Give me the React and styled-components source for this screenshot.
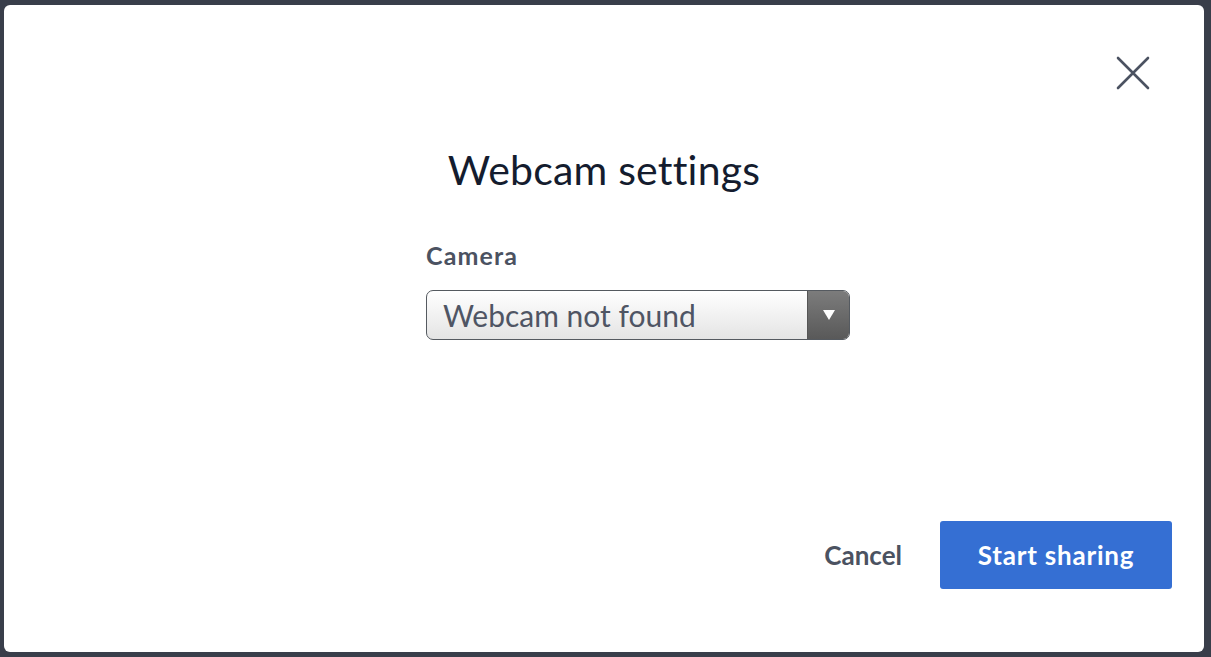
import React from "react";
import styled, { createGlobalStyle } from "styled-components";

const Global = createGlobalStyle`
  html, body { margin: 0; padding: 0; }
  body {
    background: #393e4a;
    font-family: Lato, "Open Sans", sans-serif;
  }
`;

const Screen = styled.div`
  width: 1211px;
  height: 657px;
  box-sizing: border-box;
  padding: 5px 7px 5px 4px;
  display: flex;
`;

const Dialog = styled.div`
  flex: 1;
  background: #ffffff;
  border-radius: 6px;
  position: relative;
  display: flex;
  flex-direction: column;
`;

const CloseButton = styled.button`
  position: absolute;
  top: 46px;
  right: 49px;
  width: 44px;
  height: 44px;
  padding: 0;
  border: none;
  background: transparent;
  display: flex;
  align-items: center;
  justify-content: center;
  cursor: pointer;
`;

const Title = styled.h1`
  margin: 137px 0 0;
  text-align: center;
  font-size: 41px;
  font-weight: 400;
  line-height: 56px;
  color: #141c2e;
  letter-spacing: 0.2px;
`;

const Form = styled.div`
  margin: 42px 0 0 422px;
  width: 424px;
  display: flex;
  flex-direction: column;
  gap: 20px;
`;

const Label = styled.label`
  font-size: 25px;
  font-weight: 700;
  color: #4b5261;
  line-height: 30px;
  letter-spacing: 1.1px;
`;

const Select = styled.div`
  height: 50px;
  box-sizing: border-box;
  border: 1.5px solid #555a60;
  border-radius: 7px;
  overflow: hidden;
  display: flex;
  background: linear-gradient(#ffffff, #e4e4e4);
`;

const SelectValue = styled.div`
  flex: 1;
  display: flex;
  align-items: center;
  padding-left: 16px;
  font-size: 30px;
  color: #4f5564;
`;

const SelectArrow = styled.div`
  width: 41px;
  border-left: 1px solid #555;
  background: linear-gradient(#7c7c7c, #595959);
  display: flex;
  align-items: center;
  justify-content: center;
`;

const Footer = styled.div`
  margin-top: auto;
  padding: 0 32px 63px 0;
  display: flex;
  justify-content: flex-end;
  align-items: center;
  gap: 38px;
`;

const TextButton = styled.button`
  border: none;
  background: transparent;
  padding: 0;
  font-family: inherit;
  font-size: 26px;
  font-weight: 700;
  color: #4b5261;
  cursor: pointer;
`;

const PrimaryButton = styled.button`
  width: 232px;
  height: 68px;
  border: none;
  border-radius: 3px;
  background: #356fd3;
  color: #ffffff;
  font-family: inherit;
  font-size: 26px;
  font-weight: 700;
  letter-spacing: 0.8px;
  cursor: pointer;
`;

export default function App() {
  return (
    <>
      <Global />
      <Screen>
        <Dialog>
          <CloseButton aria-label="Close">
            <svg width="34" height="34" viewBox="0 0 34 34">
              <path d="M2 2 L32 32 M32 2 L2 32" stroke="#4b5261" strokeWidth="2.6" strokeLinecap="round" />
            </svg>
          </CloseButton>
          <Title>Webcam settings</Title>
          <Form>
            <Label>Camera</Label>
            <Select>
              <SelectValue>Webcam not found</SelectValue>
              <SelectArrow>
                <svg width="14" height="12" viewBox="0 0 14 12">
                  <path d="M1 1 H13 L7 11 Z" fill="#ffffff" />
                </svg>
              </SelectArrow>
            </Select>
          </Form>
          <Footer>
            <TextButton>Cancel</TextButton>
            <PrimaryButton>Start sharing</PrimaryButton>
          </Footer>
        </Dialog>
      </Screen>
    </>
  );
}
